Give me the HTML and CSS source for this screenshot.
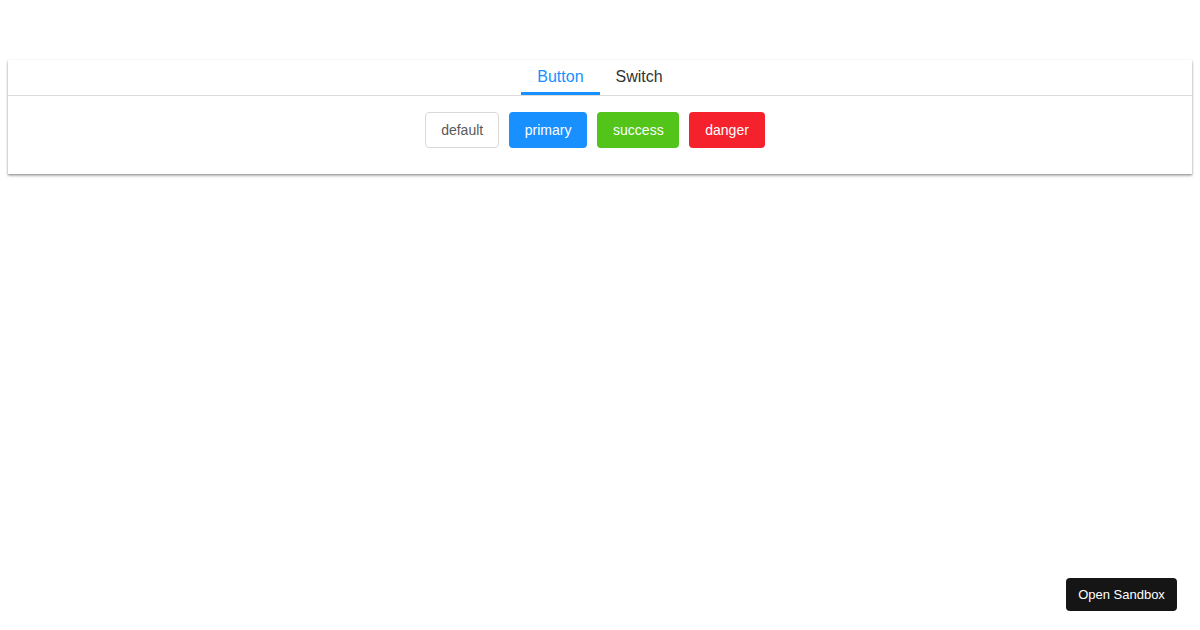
FILE: index.html
```html
<!DOCTYPE html>
<html>
<head>
<meta charset="utf-8">
<link rel="stylesheet" href="styles.css">
</head>
<body>
<div class="card">
  <div class="tabs">
    <div class="tab active">Button</div>
    <div class="tab">Switch</div>
  </div>
  <div class="panel">
    <button class="btn btn-default">default</button>
    <button class="btn btn-primary">primary</button>
    <button class="btn btn-success">success</button>
    <button class="btn btn-danger">danger</button>
  </div>
</div>
<a class="sandbox">Open Sandbox</a>
</body>
</html>
```
FILE: styles.css
```css
html, body {
  margin: 0;
  padding: 0;
  background: #fff;
  font-family: "Liberation Sans", Arial, sans-serif;
}
body {
  padding: 60px 8px 0;
  min-height: 100vh;
  box-sizing: border-box;
}
.card {
  background: #fff;
  box-shadow: 0 1px 2px rgba(0, 0, 0, 0.3), 0 2px 3px rgba(0, 0, 0, 0.2);
}
.tabs {
  display: flex;
  justify-content: center;
  border-bottom: 1px solid #dcdcdc;
}
.tab {
  font-size: 16px;
  line-height: 31px;
  padding: 1px 16px 0;
  color: #333;
  border-bottom: 3px solid transparent;
}
.tab.active {
  color: #1890ff;
  border-bottom-color: #1890ff;
}
.panel {
  display: flex;
  justify-content: center;
  padding: 16px 0 26px;
}
.btn {
  font-family: "Liberation Sans", Arial, sans-serif;
  font-size: 14px;
  height: 36px;
  padding: 0 14.8px;
  margin-right: 10px;
  border-radius: 4px;
  border: 1px solid transparent;
  color: #fff;
}
.btn-default {
  background: #fff;
  border-color: #d9d9d9;
  color: #595959;
}
.btn-primary { background: #1890ff; }
.btn-success { background: #52c41a; }
.btn-danger { background: #f5222d; }
.sandbox {
  position: fixed;
  right: 23px;
  bottom: 19px;
  width: 111px;
  height: 33px;
  line-height: 33px;
  text-align: center;
  background: #151515;
  color: #fff;
  font-size: 13px;
  border-radius: 4px;
}
```
